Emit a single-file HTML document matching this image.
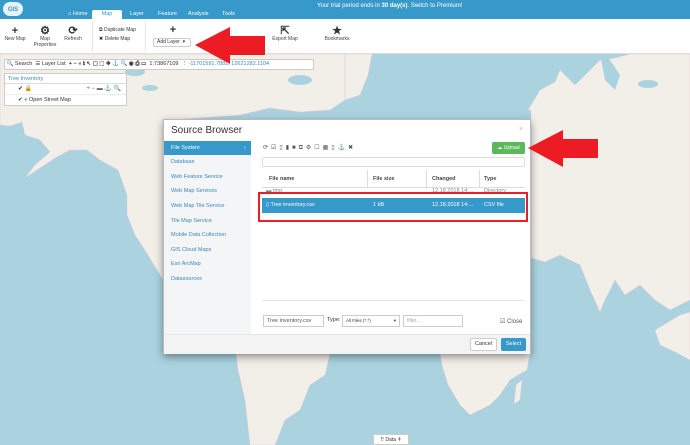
<!DOCTYPE html>
<html><head><style>
*{box-sizing:border-box;margin:0;padding:0}
body{width:690px;height:445px;overflow:hidden;font-family:"Liberation Sans",sans-serif;font-size:6px;color:#333;position:relative;background:#aad3df}
.abs{position:absolute;white-space:nowrap}
#hdr{left:0;top:0;width:690px;height:19px;background:#3799c9}
.tab{position:absolute;top:10px;height:9px;color:#fff;font-size:5.5px;line-height:9px}
#tb{left:0;top:19px;width:690px;height:35px;background:#fff;border-bottom:1px solid #ddd}
.tbtn{position:absolute;text-align:center;font-size:5px;color:#444;line-height:5.5px}
.ic{font-size:11px;line-height:12px;color:#333;font-weight:bold}
#mapbar{left:4px;top:59px;width:310px;height:11px;background:#fff;border:1px solid #ccc;font-size:5.5px;line-height:9px}
#lp{left:4px;top:73px;width:123px;height:33px;background:#fff;border:1px solid #ccc}
#dlg{left:163px;top:119px;width:368px;height:235px;background:#fff;border:1px solid #bbb;box-shadow:0 3px 8px rgba(0,0,0,.4)}
.nav{position:absolute;left:0;width:87px;height:14px;color:#3a87b8;font-size:5.5px;line-height:14px;padding-left:7px}
</style></head><body>
<svg class="abs" style="left:0;top:0" width="690" height="445">
<g fill="#f2efe9" stroke="#e0c8dc" stroke-width=".5">
<path d="M0,54 H345 V100 L330,110 300,112 270,108 240,115 200,118 170,120 163,120 V280 L157,270 148,255 135,235 127,215 127,195 118,170 100,160 87,150 70,150 55,158 40,168 25,178 35,165 50,152 40,140 25,135 22,122 10,126 0,125Z"/>
<path d="M345,54 H372 L368,75 360,95 345,100Z"/>
<path d="M528,110 L540,90 555,82 560,70 575,85 590,70 600,60 615,58 630,54 H690 V300 L670,310 655,300 640,285 625,295 615,280 605,300 600,312 590,290 580,265 560,255 545,262 531,258 V110Z"/>
<path d="M600,54 L610,60 620,75 615,90 605,80Z" fill="#aad3df" stroke="none"/>
<path d="M236,354 L330,354 325,375 310,385 300,410 285,420 275,445 H250 L245,400 238,370Z"/>
<path d="M440,354 L530,354 527,370 510,380 500,395 490,405 470,415 460,405 448,385 442,365Z"/>
<path d="M516,385 L522,380 520,400 514,404Z"/>
<path d="M655,330 L680,315 690,312 V360 L675,352 660,345Z"/>
</g>
<g fill="#aad3df"><ellipse cx="135" cy="72" rx="10" ry="4"/><ellipse cx="150" cy="88" rx="8" ry="3"/><ellipse cx="300" cy="80" rx="12" ry="5"/><ellipse cx="648" cy="84" rx="10" ry="4"/></g>
</svg>
<div id="hdr" class="abs">
<div class="abs" style="left:3px;top:2px;width:20px;height:14px;background:#e8f2f9;border-radius:7px;color:#3799c9;font-size:6px;font-weight:bold;text-align:center;line-height:16px">GIS</div>
<div class="tab" style="left:68px">⌂ Home</div>
<div class="tab" style="left:92px;width:30px;background:#fff;color:#3799c9;text-align:center;border-radius:2px 2px 0 0">Map</div>
<div class="tab" style="left:130px">Layer</div>
<div class="tab" style="left:158px">Feature</div>
<div class="tab" style="left:188px">Analysis</div>
<div class="tab" style="left:222px">Tools</div>
<div class="abs" style="left:317px;top:3px;color:#fff;font-size:6px">Your trial period ends in <b>30 day(s)</b>. Switch to Premium!</div>
</div>
<div id="tb" class="abs">
<div class="tbtn" style="left:3px;top:6px;width:24px"><div class="ic">+</div>New Map</div>
<div class="tbtn" style="left:32px;top:6px;width:26px"><div class="ic">⚙</div>Map<br>Properties</div>
<div class="tbtn" style="left:60px;top:6px;width:26px"><div class="ic">⟳</div>Refresh</div>
<div class="abs" style="left:92px;top:2px;width:1px;height:30px;background:#e5e5e5"></div>
<div class="abs" style="left:99px;top:8px;font-size:5px">⧉ Duplicate Map</div>
<div class="abs" style="left:99px;top:17px;font-size:5px">✖ Delete Map</div>
<div class="abs" style="left:145px;top:2px;width:1px;height:30px;background:#e5e5e5"></div>
<div class="tbtn" style="left:155px;top:5px;width:36px"><div class="ic">+</div></div>
<div class="abs" style="left:153px;top:19px;width:38px;height:9px;border:1px solid #ccc;border-radius:2px;font-size:5px;line-height:7px;padding-left:3px">Add Layer &nbsp;▾</div>
<div class="tbtn" style="left:270px;top:6px;width:30px"><div class="ic">⇱</div>Export Map</div>
<div class="tbtn" style="left:322px;top:6px;width:30px"><div class="ic">★</div>Bookmarks</div>
</div>
<div id="mapbar" class="abs">&nbsp;🔍 Search &nbsp;☰ Layer List &nbsp;<b>+ − « ℹ ↖ ▢ ⬚ ✥ ⚓ 🔍 ◉ ⎙ ▭</b> &nbsp;1:73867109 &nbsp;⋮ <span style="color:#3a87b8">-11701591.7881, 12621282.1104</span></div>
<div id="lp" class="abs">
<div style="height:10px;border-bottom:1px solid #ddd;color:#3a87b8;font-size:5.5px;line-height:10px;padding-left:3px">Tree Inventory</div>
<div style="height:11px;border-bottom:1px solid #eee;font-size:6px;line-height:11px;padding-left:13px">✔ 🔒<span style="float:right;padding-right:5px;color:#666">+ − ▬ ⚓ 🔍</span></div>
<div style="height:10px;font-size:5.5px;line-height:10px;padding-left:13px">✔ <span style="color:#5c5">●</span> Open Street Map</div>
</div>
<div id="dlg" class="abs">
<div class="abs" style="left:7px;top:5px;font-size:10px;color:#333">Source Browser</div>
<div class="abs" style="right:7px;top:6px;color:#bbb;font-size:7px">×</div>
<div class="abs" style="left:0;top:21px;width:87px;height:193px;background:#f4f5f6"></div>
<div class="nav" style="top:21px;background:#3799c9;color:#fff">File System<span style="float:right;padding-right:5px">›</span></div>
<div class="nav" style="top:35px">Database</div>
<div class="nav" style="top:50px">Web Feature Service</div>
<div class="nav" style="top:64px">Web Map Services</div>
<div class="nav" style="top:79px">Web Map Tile Service</div>
<div class="nav" style="top:94px">Tile Map Service</div>
<div class="nav" style="top:108px">Mobile Data Collection</div>
<div class="nav" style="top:123px">GIS Cloud Maps</div>
<div class="nav" style="top:137px">Esri ArcMap</div>
<div class="nav" style="top:152px">Datasources</div>
<div class="abs" style="left:99px;top:24px;font-size:6px;color:#555;letter-spacing:3px">⟳☑▯▮■⧉⚙☐▦▯⚓✖</div>
<div class="abs" style="left:328px;top:22px;width:33px;height:12px;background:#5cb85c;border-radius:2px;color:#fff;font-size:5px;line-height:12px;text-align:center">☁ Upload</div>
<div class="abs" style="left:98px;top:37px;width:263px;height:10px;border:1px solid #ddd;border-radius:2px"></div>
<div class="abs" style="left:98px;top:50px;width:263px;height:18px;border-bottom:1px solid #ddd;font-size:5.5px;line-height:18px;font-weight:bold;color:#444">
<span class="abs" style="left:7px">File name</span><span class="abs" style="left:111px">File size</span><span class="abs" style="left:170px">Changed</span><span class="abs" style="left:222px">Type</span>
<div class="abs" style="left:105px;top:0;width:1px;height:18px;background:#ddd"></div><div class="abs" style="left:164px;top:0;width:1px;height:18px;background:#ddd"></div><div class="abs" style="left:217px;top:0;width:1px;height:18px;background:#ddd"></div></div>
<div class="abs" style="left:98px;top:68px;width:263px;height:9px;font-size:5.5px;line-height:7px;color:#888;overflow:hidden"><span class="abs" style="left:4px">▬ tmp</span><span class="abs" style="left:170px">12.18.2018 14:...</span><span class="abs" style="left:222px">Directory</span></div>
<div class="abs" style="left:98px;top:78px;width:263px;height:15px;background:#3799c9;color:#fff;font-size:5.5px;line-height:15px"><span class="abs" style="left:4px">▯ Tree inventory.csv</span><span class="abs" style="left:111px">1 kB</span><span class="abs" style="left:170px">12.18.2018 14:...</span><span class="abs" style="left:222px">CSV file</span></div>
<div class="abs" style="left:98px;top:180px;width:263px;height:1px;background:#e5e5e5"></div>
<div class="abs" style="left:99px;top:195px;width:61px;height:12px;border:1px solid #ccc;font-size:5.5px;line-height:10px;padding-left:3px;color:#555">Tree inventory.csv</div>
<div class="abs" style="left:163px;top:197px;font-size:5.5px">Type:</div>
<div class="abs" style="left:178px;top:195px;width:58px;height:12px;border:1px solid #ccc;font-size:4.5px;line-height:10px;padding-left:3px">All Files (*.*)<span style="float:right;padding-right:3px">▾</span></div>
<div class="abs" style="left:239px;top:195px;width:60px;height:12px;border:1px solid #ccc;font-size:5px;line-height:10px;padding-left:3px;color:#aaa">filter...</div>
<div class="abs" style="left:336px;top:198px;font-size:6px;color:#555">☑ Close</div>
<div class="abs" style="left:0;top:214px;width:366px;height:20px;background:#f3f3f3;border-top:1px solid #e5e5e5"></div>
<div class="abs" style="left:306px;top:218px;width:27px;height:13px;background:#fff;border:1px solid #ccc;border-radius:2px;font-size:5.5px;line-height:11px;text-align:center">Cancel</div>
<div class="abs" style="left:337px;top:218px;width:25px;height:13px;background:#3799c9;border-radius:2px;color:#fff;font-size:5.5px;line-height:13px;text-align:center">Select</div>
</div>
<div class="abs" style="left:258px;top:192px;width:270px;height:30px;border:2px solid #e8202a"></div>
<svg class="abs" style="left:0;top:0" width="690" height="445">
<polygon fill="#ed1c24" points="195,45 230,27 230,36 265,36 265,55 230,55 230,64" />
<polygon fill="#ed1c24" points="528,148 563,130 563,139 598,139 598,158 563,158 563,167"/>
</svg>
<div class="abs" style="left:373px;top:434px;width:36px;height:11px;background:#fff;border:1px solid #ccc;font-size:5px;line-height:10px;text-align:center">⠿ Data ↟</div>
</body></html>
